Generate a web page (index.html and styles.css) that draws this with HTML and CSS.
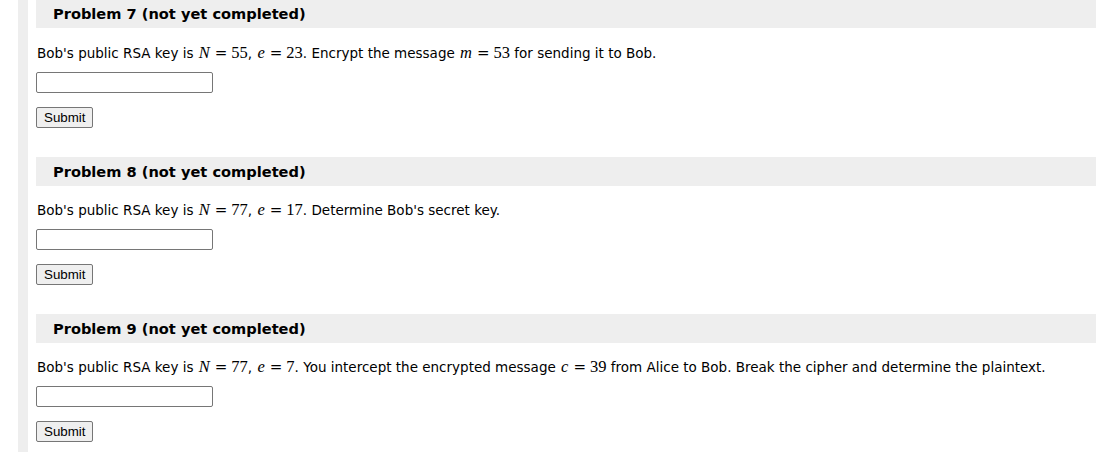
FILE: index.html
```html
<!DOCTYPE html>
<html>
<head>
<meta charset="utf-8">
<link rel="stylesheet" href="styles.css">
</head>
<body>
<div class="page">
  <section class="problem first">
    <h2 class="title">Problem 7 (not yet completed)</h2>
    <p class="text">Bob's public RSA key is <span class="math"><i>N</i><span class="rel">=</span>55</span>, <span class="math"><i>e</i><span class="rel">=</span>23</span>. Encrypt the message <span class="math"><i>m</i><span class="rel">=</span>53</span> for sending it to Bob.</p>
    <input class="answer" type="text">
    <button class="submit">Submit</button>
  </section>
  <section class="problem">
    <h2 class="title">Problem 8 (not yet completed)</h2>
    <p class="text">Bob's public RSA key is <span class="math"><i>N</i><span class="rel">=</span>77</span>, <span class="math"><i>e</i><span class="rel">=</span>17</span>. Determine Bob's secret key.</p>
    <input class="answer" type="text">
    <button class="submit">Submit</button>
  </section>
  <section class="problem">
    <h2 class="title">Problem 9 (not yet completed)</h2>
    <p class="text">Bob's public RSA key is <span class="math"><i>N</i><span class="rel">=</span>77</span>, <span class="math"><i>e</i><span class="rel">=</span>7</span>. You intercept the encrypted message <span class="math"><i>c</i><span class="rel">=</span>39</span> from Alice to Bob. Break the cipher and determine the plaintext.</p>
    <input class="answer" type="text">
    <button class="submit">Submit</button>
  </section>
</div>
</body>
</html>
```
FILE: styles.css
```css
html, body {
  margin: 0;
  padding: 0;
  background: #fff;
}
body {
  font-family: "DejaVu Sans", Verdana, sans-serif;
  font-size: 13.5px;
  color: #000;
}
.page {
  margin-left: 18px;
  border-left: 10px solid #eeeeee;
  padding-left: 8px;
  min-height: 452px;
}
.problem {
  height: 157px;
  display: flex;
  flex-direction: column;
  align-items: flex-start;
}
.title {
  margin: 0;
  align-self: stretch;
  background: #eeeeee;
  height: 29px;
  line-height: 29px;
  padding-left: 17px;
  font-size: 14.6px;
  font-weight: bold;
}
.first .title {
  height: 28px;
  line-height: 27px;
  margin-bottom: 1px;
}
.text {
  margin: 15px 0 0 1px;
  height: 18px;
  line-height: 18px;
  white-space: nowrap;
}
.math {
  font-family: "Liberation Serif", "DejaVu Serif", serif;
  font-size: 16.5px;
  line-height: 0;
  margin-left: 1px;
}
.math i {
  margin-right: 1px;
}
.rel {
  font-family: "DejaVu Serif", serif;
  font-size: 15px;
  padding: 0 4px;
}
.answer {
  margin-top: 10px;
  width: 177px;
  height: 21px;
  box-sizing: border-box;
  border: 1px solid #767676;
  border-radius: 2px;
  padding: 1px 2px;
  background: #fff;
  font-family: "Liberation Sans", Arial, sans-serif;
  font-size: 13.33px;
}
.submit {
  margin-top: 14px;
  height: 21px;
  box-sizing: border-box;
  padding: 0 7px;
  border: 1px solid #767676;
  border-radius: 2px;
  background: #efefef;
  font-family: "Liberation Sans", Arial, sans-serif;
  font-size: 13.33px;
  color: #000;
}
```
